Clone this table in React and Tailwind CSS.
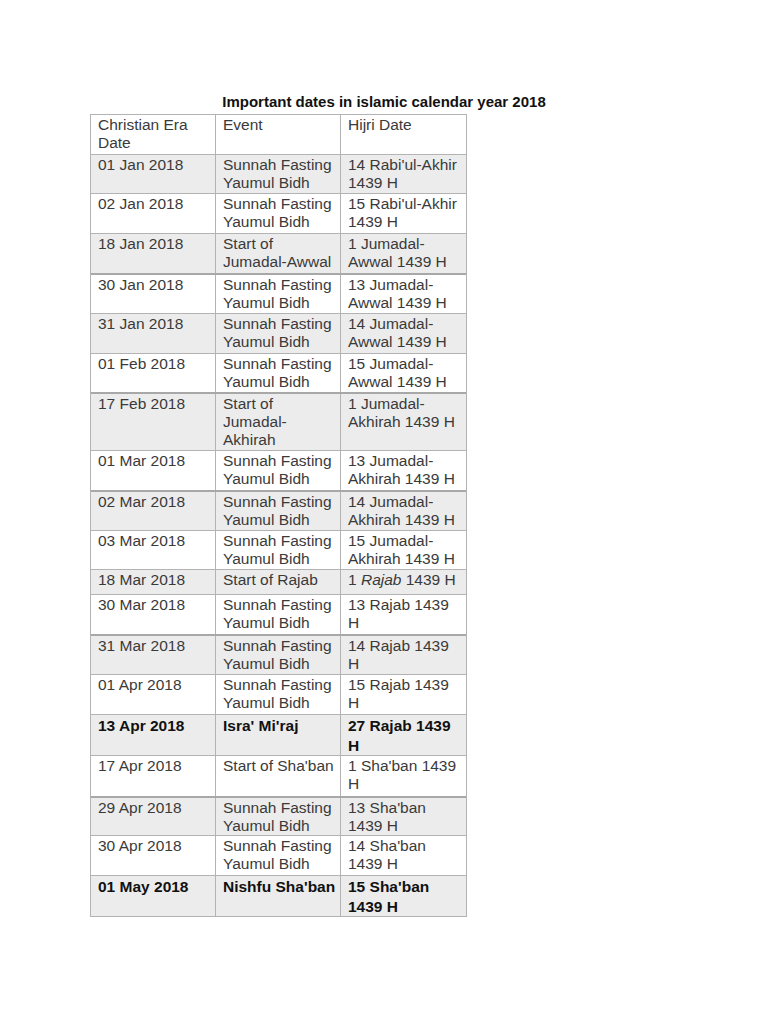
const rows = [
  { h: "h-[39px]", a: "01 Jan 2018", b: ["Sunnah Fasting", "Yaumul Bidh"], c: ["14 Rabi'ul-Akhir", "1439 H"] },
  { h: "h-[40px]", a: "02 Jan 2018", b: ["Sunnah Fasting", "Yaumul Bidh"], c: ["15 Rabi'ul-Akhir", "1439 H"] },
  { h: "h-[40px]", a: "18 Jan 2018", b: ["Start of", "Jumadal-Awwal"], c: ["1 Jumadal-", "Awwal 1439 H"] },
  { h: "h-[40px]", a: "30 Jan 2018", b: ["Sunnah Fasting", "Yaumul Bidh"], c: ["13 Jumadal-", "Awwal 1439 H"], thick: true },
  { h: "h-[40px]", a: "31 Jan 2018", b: ["Sunnah Fasting", "Yaumul Bidh"], c: ["14 Jumadal-", "Awwal 1439 H"] },
  { h: "h-[39px]", a: "01 Feb 2018", b: ["Sunnah Fasting", "Yaumul Bidh"], c: ["15 Jumadal-", "Awwal 1439 H"] },
  { h: "h-[58px]", a: "17 Feb 2018", b: ["Start of", "Jumadal-", "Akhirah"], c: ["1 Jumadal-", "Akhirah 1439 H"], thick: true },
  { h: "h-[40px]", a: "01 Mar 2018", b: ["Sunnah Fasting", "Yaumul Bidh"], c: ["13 Jumadal-", "Akhirah 1439 H"] },
  { h: "h-[40px]", a: "02 Mar 2018", b: ["Sunnah Fasting", "Yaumul Bidh"], c: ["14 Jumadal-", "Akhirah 1439 H"], thick: true },
  { h: "h-[39px]", a: "03 Mar 2018", b: ["Sunnah Fasting", "Yaumul Bidh"], c: ["15 Jumadal-", "Akhirah 1439 H"] },
  { h: "h-[25px]", a: "18 Mar 2018", b: ["Start of Rajab"], c: "rajab" },
  { h: "h-[40px]", a: "30 Mar 2018", b: ["Sunnah Fasting", "Yaumul Bidh"], c: ["13 Rajab 1439", "H"] },
  { h: "h-[40px]", a: "31 Mar 2018", b: ["Sunnah Fasting", "Yaumul Bidh"], c: ["14 Rajab 1439", "H"], thick: true },
  { h: "h-[40px]", a: "01 Apr 2018", b: ["Sunnah Fasting", "Yaumul Bidh"], c: ["15 Rajab 1439", "H"] },
  { h: "h-[41px]", a: "13 Apr 2018", b: ["Isra' Mi'raj"], c: ["27 Rajab 1439", "H"], bold: true },
  { h: "h-[41px]", a: "17 Apr 2018", b: ["Start of Sha'ban"], c: ["1 Sha'ban 1439", "H"] },
  { h: "h-[39px]", a: "29 Apr 2018", b: ["Sunnah Fasting", "Yaumul Bidh"], c: ["13 Sha'ban", "1439 H"], thick: true },
  { h: "h-[40px]", a: "30 Apr 2018", b: ["Sunnah Fasting", "Yaumul Bidh"], c: ["14 Sha'ban", "1439 H"] },
  { h: "h-[41px]", a: "01 May 2018", b: ["Nishfu Sha'ban"], c: ["15 Sha'ban", "1439 H"], bold: true },
];

function Lines({ items }) {
  return items.map((t, i) => <div key={i}>{t}</div>);
}

export default function App() {
  return (
    <div className="min-h-[1024px] w-full bg-white pt-[93px] font-['Liberation_Sans',Arial,sans-serif] text-[15.5px] leading-[18px] text-[#3a3a3a]">
      {/* Title */}
      <h1 className="mb-[3px] text-center text-[15px] font-bold leading-[18px] text-[#111]">
        Important dates in islamic calendar year 2018
      </h1>

      {/* Table */}
      <div className="ml-[90px] w-[377px] border border-[#b3b3b3]">
        <div className="grid h-[39px] grid-cols-[125px_125px_1fr] bg-white">
          <div className="border-r border-[#b3b3b3] pl-[7px] pt-[1px]">
            <div>Christian Era</div>
            <div>Date</div>
          </div>
          <div className="border-r border-[#b3b3b3] pl-[7px] pt-[1px]">Event</div>
          <div className="pl-[7px] pt-[1px]">Hijri Date</div>
        </div>

        {rows.map((r, i) => (
          <div
            key={r.a}
            className={`grid grid-cols-[125px_125px_1fr] ${r.h} ${
              r.thick ? "border-t-2 border-[#a8a8a8]" : "border-t border-[#b3b3b3]"
            } ${i % 2 === 0 ? "bg-[#ececec]" : "bg-white"} ${
              r.bold ? "font-bold leading-[20px] text-[#111]" : ""
            }`}
          >
            <div className="border-r border-[#b3b3b3] pl-[7px] pt-[1px]">{r.a}</div>
            <div className="border-r border-[#b3b3b3] pl-[7px] pt-[1px]">
              <Lines items={r.b} />
            </div>
            <div className="pl-[7px] pt-[1px]">
              {r.c === "rajab" ? (
                <div>
                  1 <span className="italic">Rajab</span> 1439 H
                </div>
              ) : (
                <Lines items={r.c} />
              )}
            </div>
          </div>
        ))}
      </div>
    </div>
  );
}
